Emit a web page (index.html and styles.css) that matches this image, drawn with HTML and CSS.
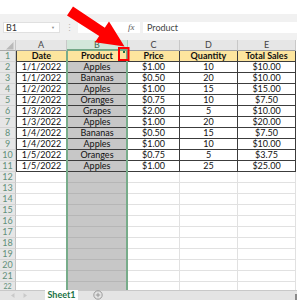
FILE: index.html
```html
<!DOCTYPE html>
<html>
<head>
<meta charset="utf-8">
<link rel="stylesheet" href="styles.css">
</head>
<body>
<div class="app">
  <div class="top"></div>
  <div class="fbar">
    <div class="namebox"><span>B1</span><span class="dd">▼</span></div>
    <div class="sep">⋮</div>
    <div class="fxbox"><span class="x">✕</span><span class="ok">✓</span><span class="fx">fx</span></div>
    <div class="formula">Product</div>
  </div>
  <div class="sheet">
    <div class="corner"><svg width="16" height="10" viewBox="0 0 16 10"><polygon points="13.5,2 13.5,9.5 6,9.5" fill="#b9b9b9"/></svg></div>
    <div class="h">A</div><div class="h s">B</div><div class="h">C</div><div class="h">D</div><div class="h">E</div>

    <div class="r">1</div><div class="t a y">Date</div><div class="t y">Product</div><div class="t y">Price</div><div class="t y">Quantity</div><div class="t y">Total Sales</div>
    <div class="r">2</div><div class="t a">1/1/2022</div><div class="t g">Apples</div><div class="t">$1.00</div><div class="t">10</div><div class="t">$10.00</div>
    <div class="r">3</div><div class="t a">1/1/2022</div><div class="t g">Bananas</div><div class="t">$0.50</div><div class="t">20</div><div class="t">$10.00</div>
    <div class="r">4</div><div class="t a">1/2/2022</div><div class="t g">Apples</div><div class="t">$1.00</div><div class="t">15</div><div class="t">$15.00</div>
    <div class="r">5</div><div class="t a">1/2/2022</div><div class="t g">Oranges</div><div class="t">$0.75</div><div class="t">10</div><div class="t">$7.50</div>
    <div class="r">6</div><div class="t a">1/3/2022</div><div class="t g">Grapes</div><div class="t">$2.00</div><div class="t">5</div><div class="t">$10.00</div>
    <div class="r">7</div><div class="t a">1/3/2022</div><div class="t g">Apples</div><div class="t">$1.00</div><div class="t">20</div><div class="t">$20.00</div>
    <div class="r">8</div><div class="t a">1/4/2022</div><div class="t g">Bananas</div><div class="t">$0.50</div><div class="t">15</div><div class="t">$7.50</div>
    <div class="r">9</div><div class="t a">1/4/2022</div><div class="t g">Apples</div><div class="t">$1.00</div><div class="t">10</div><div class="t">$10.00</div>
    <div class="r">10</div><div class="t a">1/5/2022</div><div class="t g">Oranges</div><div class="t">$0.75</div><div class="t">5</div><div class="t">$3.75</div>
    <div class="r">11</div><div class="t a">1/5/2022</div><div class="t g">Apples</div><div class="t">$1.00</div><div class="t">25</div><div class="t">$25.00</div>

    <div class="r">12</div><div></div><div class="g"></div><div></div><div></div><div></div>
    <div class="r">13</div><div></div><div class="g"></div><div></div><div></div><div></div>
    <div class="r">14</div><div></div><div class="g"></div><div></div><div></div><div></div>
    <div class="r">15</div><div></div><div class="g"></div><div></div><div></div><div></div>
    <div class="r">16</div><div></div><div class="g"></div><div></div><div></div><div></div>
    <div class="r">17</div><div></div><div class="g"></div><div></div><div></div><div></div>
    <div class="r">18</div><div></div><div class="g"></div><div></div><div></div><div></div>
    <div class="r">19</div><div></div><div class="g"></div><div></div><div></div><div></div>
    <div class="r">20</div><div></div><div class="g"></div><div></div><div></div><div></div>
    <div class="r">21</div><div></div><div class="g"></div><div></div><div></div><div></div>
    <div class="r last">22</div><div></div><div class="g"></div><div></div><div></div><div></div>

    <div class="selframe"></div>
  </div>
  <div class="tabs">
    <div class="nav">
      <svg width="4" height="5" viewBox="0 0 4 5"><polygon points="3.5,0 3.5,5 0,2.5" fill="#c9c9c9"/></svg>
      <svg width="4" height="5" viewBox="0 0 4 5"><polygon points="0.5,0 0.5,5 4,2.5" fill="#c9c9c9"/></svg>
    </div>
    <div class="tab">Sheet1</div>
    <div class="add"><svg width="10" height="10" viewBox="0 0 10 10"><circle cx="5" cy="5" r="4.2" fill="none" stroke="#8a8a8a" stroke-width="0.8"/><path d="M5 2.8V7.2M2.8 5H7.2" stroke="#8a8a8a" stroke-width="0.8"/></svg></div>
    <div class="scroll"></div>
  </div>
  <svg class="annot" width="297" height="300" viewBox="0 0 297 300">
    <rect x="123" y="51" width="2" height="2" fill="#217346"/>
    <polygon points="73,6.5 104.8,27.8 109,21.5 124.5,46.5 95,42.3 99.2,36 67,15.5" fill="#ff0000"/>
    <rect x="119" y="48" width="9.5" height="12" fill="none" stroke="#ff0000" stroke-width="2"/>
  </svg>
</div>
</body>
</html>
```

FILE: styles.css
```css
* { box-sizing: border-box; }
html, body { margin: 0; padding: 0; }
body {
  width: 297px;
  height: 300px;
  overflow: hidden;
  background: #fff;
  font-family: Lato, "Liberation Sans", sans-serif;
  font-size: 9px;
  color: #1a1a1a;
}
.app { position: relative; width: 297px; height: 300px; overflow: hidden; }
.top { height: 14px; background: #fff; }

.fbar {
  height: 26px;
  background: #f1f1f1;
  display: flex;
  align-items: flex-start;
  padding-top: 8px;
}
.namebox {
  margin-left: 3px;
  width: 57px;
  height: 11px;
  background: #fff;
  border: 1px solid #e0e0e0;
  display: flex;
  align-items: center;
  justify-content: space-between;
  padding: 0 4px 0 2px;
  color: #333;
  line-height: 9px;
}
.dd { font-size: 4px; color: #8c8c8c; }
.sep { width: 18px; text-align: center; color: #b4b4b4; line-height: 11px; }
.fxbox {
  width: 62px;
  height: 11px;
  background: #fff;
  display: flex;
  align-items: center;
  line-height: 11px;
}
.fxbox .x { margin-left: 9px; color: #e6e6e6; font-size: 7px; }
.fxbox .ok { margin-left: 13px; color: #c4c4c4; font-size: 8px; }
.fxbox .fx { margin-left: 15px; color: #5a5a5a; font-family: "Liberation Serif", serif; font-style: italic; font-size: 9px; }
.formula {
  margin-left: 3px;
  flex: 1;
  height: 11px;
  background: #fff;
  padding-left: 4px;
  line-height: 11px;
  color: #444;
}

.sheet {
  position: relative;
  display: grid;
  grid-template-columns: 16px 51px 61px 52px 58px 58px;
  grid-auto-rows: 11px;
  height: 250px;
  overflow: hidden;
  background: #fff;
}
.sheet > div {
  border-right: 1px solid #e1e1e1;
  border-bottom: 1px solid #e1e1e1;
  text-align: center;
  line-height: 10px;
  white-space: nowrap;
  overflow: hidden;
}
.sheet > .corner { background: #e6e6e6; border-right-color: #c6c6c6; border-bottom-color: #a9a9a9; }
.corner svg { display: block; }
.sheet > .h { background: #e6e6e6; color: #444; border-right-color: #c8c8c8; border-bottom-color: #9d9d9d; }
.sheet > .h.s { background: #d3e7da; color: #3d6b4f; border-right-color: #a9cbb5; border-bottom: 2px solid #74a887; line-height: 9px; }
.sheet > .r { background: #e6e6e6; color: #62907a; border-right-color: #c4c4c4; border-bottom-color: #d4d4d4; }
.sheet > .r.last { font-size: 7px; line-height: 8px; }
.sheet > .g { background: #c7c7c7; border-bottom-color: #b6b6b6; }
.sheet > .t { border-right-color: #3c3c3c; border-bottom-color: #3c3c3c; color: #111; }
.sheet > .t.a { border-left: 1px solid #3c3c3c; }
.sheet > .y { background: #fde59e; font-weight: 700; }

.selframe {
  position: absolute;
  left: 66px;
  top: 11px;
  width: 62px;
  bottom: 0;
  border-left: 2px solid #77ac8a !important;
  border-right: 2px solid #77ac8a !important;
  border-bottom: none !important;
  pointer-events: none;
}

.tabs {
  height: 10px;
  background: #e4e4e4;
  border-top: 1px solid #c8c8c8;
  display: flex;
  align-items: center;
}
.nav {
  width: 45px;
  display: flex;
  align-items: center;
  padding-left: 11px;
  gap: 8px;
}
.nav svg { display: block; }
.tab {
  width: 33px;
  height: 10px;
  margin-top: -1px;
  background: #fff;
  color: #217346;
  font-weight: 700;
  text-align: center;
  line-height: 10px;
}
.add { margin-left: 15px; height: 10px; }
.add svg { display: block; margin-top: -1px; }
.scroll {
  margin-left: auto;
  align-self: flex-end;
  width: 2px;
  height: 6px;
  background: #8a8a8a;
}

.annot { position: absolute; left: 0; top: 0; pointer-events: none; }
```
